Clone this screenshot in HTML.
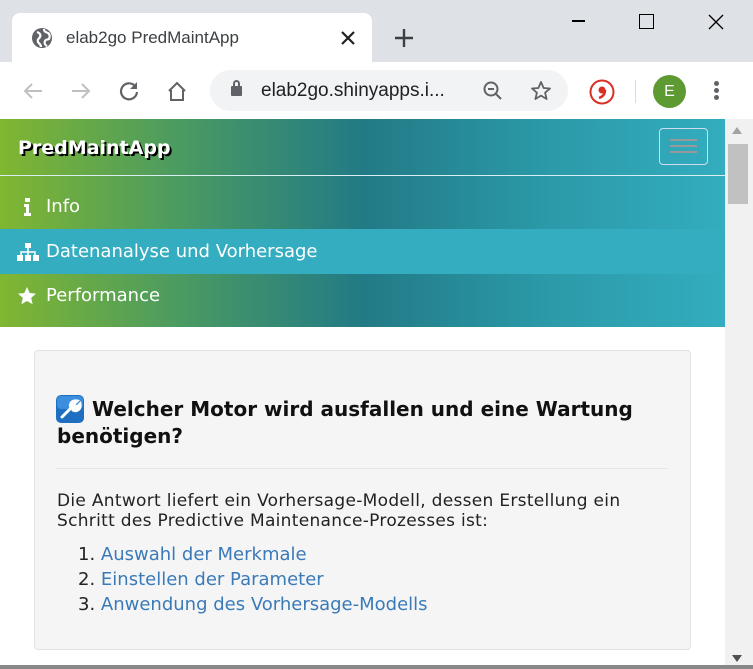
<!DOCTYPE html>
<html><head><meta charset="utf-8"><style>
*{margin:0;padding:0;box-sizing:border-box}
body{width:753px;height:669px;overflow:hidden;background:#fff;font-family:"DejaVu Sans","Liberation Sans",sans-serif;position:relative}
.a{position:absolute}
.grad{background:linear-gradient(90deg,#80b631 0%,#4a9a62 25%,#227a85 50%,#2b99a8 75%,#33adbf 100%)}
.nav{color:#fff;font-size:18px}
</style></head><body>
<div class="a" style="left:0;top:0;width:753px;height:62px;background:#dee1e6"></div>
<div class="a" style="left:12px;top:13px;width:360px;height:50px;background:#fff;border-radius:8px 8px 0 0"></div>
<svg class="a" style="left:31px;top:27px" width="22" height="22" viewBox="0 0 22 22"><circle cx="11" cy="11" r="10" fill="#5f6368"/><path d="M6 5c3 1 4 3 3 5s-3 2-2 5c1 2 3 2 3 5M13 2c0 3 2 3 4 4s2 4 1 6c-2 1-3 0-4 2s0 4 2 5" stroke="#fff" stroke-width="2.2" fill="none"/></svg>
<div class="a" style="left:66px;top:28px;font-family:'Liberation Sans',sans-serif;font-size:17px;color:#3c4043">elab2go PredMaintApp</div>
<svg class="a" style="left:341px;top:31px" width="14" height="14"><path d="M1 1L13 13M13 1L1 13" stroke="#202124" stroke-width="2.2"/></svg>
<svg class="a" style="left:394px;top:28px" width="20" height="20"><path d="M10 1v18M1 10h18" stroke="#3c4043" stroke-width="2.4"/></svg>
<div class="a" style="left:572px;top:20px;width:13px;height:1.5px;background:#000"></div>
<div class="a" style="left:639px;top:14px;width:15px;height:15px;border:1.5px solid #000"></div>
<svg class="a" style="left:708px;top:14px" width="16" height="16"><path d="M1 1L15 15M15 1L1 15" stroke="#000" stroke-width="1.3"/></svg>
<div class="a" style="left:0;top:62px;width:753px;height:56px;background:#fff"></div>
<svg class="a" style="left:22px;top:81px" width="22" height="20"><path d="M20 10H3M10 3L3 10l7 7" stroke="#c0c0c0" stroke-width="2" fill="none"/></svg>
<svg class="a" style="left:70px;top:81px" width="22" height="20"><path d="M2 10h17M12 3l7 7-7 7" stroke="#c0c0c0" stroke-width="2" fill="none"/></svg>
<svg class="a" style="left:118px;top:80px" width="22" height="22"><path d="M17 6A8 8 0 1 0 19 12" stroke="#5f6368" stroke-width="2.2" fill="none"/><path d="M19 2v7h-7z" fill="#5f6368"/></svg>
<svg class="a" style="left:166px;top:80px" width="22" height="22"><path d="M3 11L11 3l8 8M5 10v10h12V10" stroke="#5f6368" stroke-width="2" fill="none"/></svg>
<div class="a" style="left:210px;top:70px;width:358px;height:41px;background:#f1f3f4;border-radius:21px"></div>
<div class="a" style="left:231px;top:86px;width:11px;height:10px;background:#5f6368;border-radius:1px"></div>
<div class="a" style="left:233px;top:80px;width:7px;height:9px;border:2px solid #5f6368;border-radius:4px 4px 0 0"></div>
<div class="a" style="left:261px;top:80px;font-family:'Liberation Sans',sans-serif;font-size:19px;color:#202124">elab2go.shinyapps.i...</div>
<svg class="a" style="left:482px;top:80px" width="22" height="22"><circle cx="9" cy="9" r="6.5" stroke="#5f6368" stroke-width="2" fill="none"/><path d="M6 9h6M14 14l5 5" stroke="#5f6368" stroke-width="2"/></svg>
<svg class="a" style="left:530px;top:80px" width="22" height="22"><path d="M11 2l2.6 6 6.4.5-4.9 4.2 1.5 6.3L11 15.6 5.4 19l1.5-6.3L2 8.5 8.4 8z" stroke="#5f6368" stroke-width="1.8" fill="none" stroke-linejoin="round"/></svg>
<svg class="a" style="left:589px;top:79px" width="26" height="26"><circle cx="13" cy="13" r="11.5" stroke="#d93025" stroke-width="2" fill="none"/><circle cx="13" cy="11" r="3.5" fill="#d93025"/><path d="M16 11c0 5-3 7-6 8" stroke="#d93025" stroke-width="2.5" fill="none"/></svg>
<div class="a" style="left:635px;top:80px;width:1px;height:23px;background:#dadce0"></div>
<div class="a" style="left:653px;top:75px;width:33px;height:33px;border-radius:50%;background:#5e9a32;color:#fff;font:16px 'Liberation Sans',sans-serif;text-align:center;line-height:33px">E</div>
<div class="a" style="left:714px;top:81px;width:5px;height:5px;border-radius:50%;background:#5f6368;box-shadow:0 7px 0 #5f6368,0 14px 0 #5f6368"></div>
<div class="a grad" style="left:0;top:119px;width:725px;height:208px"></div>
<div class="a" style="left:0;top:175px;width:725px;height:1px;background:#d8eef2"></div>
<div class="a" style="left:18px;top:137px;font-size:19px;font-weight:bold;color:#fff;text-shadow:2px 2px 0 #000">PredMaintApp</div>
<div class="a" style="left:659px;top:128px;width:49px;height:37px;border:1px solid #cde;border-radius:4px"></div>
<div class="a" style="left:670px;top:139px;width:27px;height:2px;background:#999;box-shadow:0 6px 0 #999,0 12px 0 #999"></div>
<svg class="a" style="left:23px;top:198px" width="9" height="18"><rect x="2" y="0" width="5" height="4" fill="#fff"/><path d="M1 6h5v9h2v3H1v-3h2V9H1z" fill="#fff"/></svg>
<div class="a nav" style="left:46px;top:196px">Info</div>
<div class="a" style="left:0;top:229px;width:725px;height:45px;background:#33adbf"></div>
<svg class="a" style="left:17px;top:243px" width="22" height="18"><rect x="8" y="0" width="6" height="5" fill="#fff"/><path d="M11 5v4M4 12V9h14v3M11 9v3" stroke="#fff" stroke-width="1.5" fill="none"/><rect x="0" y="12" width="6" height="6" fill="#fff"/><rect x="8" y="12" width="6" height="6" fill="#fff"/><rect x="16" y="12" width="6" height="6" fill="#fff"/></svg>
<div class="a nav" style="left:46px;top:241px">Datenanalyse und Vorhersage</div>
<svg class="a" style="left:17px;top:286px" width="20" height="20"><path d="M10 1l2.7 6 6.3.6-4.8 4.3 1.4 6.4L10 15l-5.6 3.3 1.4-6.4L1 7.6 7.3 7z" fill="#fff"/></svg>
<div class="a nav" style="left:46px;top:285px">Performance</div>
<div class="a" style="left:725px;top:119px;width:28px;height:550px;background:#f1f1f1"></div>
<div class="a" style="left:728px;top:144px;width:20px;height:60px;background:#c1c1c1"></div>
<div class="a" style="left:732px;top:127px;width:0;height:0;border:5px solid transparent;border-bottom:7px solid #a3a3a3;border-top:0"></div>
<div class="a" style="left:732px;top:655px;width:0;height:0;border:5px solid transparent;border-top:7px solid #505050;border-bottom:0"></div>
<div class="a" style="left:0;top:665px;width:753px;height:4px;background:#888"></div>
<div class="a" style="left:34px;top:350px;width:657px;height:300px;background:#f5f5f5;border:1px solid #e3e3e3;border-radius:4px"></div>
<svg class="a" style="left:56px;top:395px" width="28" height="28"><rect width="28" height="28" rx="5" fill="#1e6fbf"/><rect x="1" y="1" width="26" height="13" rx="4" fill="#3b8fde"/><path d="M6 22L15 13M15 13c-2-4 1-8 6-7l-3 3 1 2 2 1 3-3c1 5-3 8-7 6" stroke="#fff" stroke-width="3" fill="#fff" stroke-linecap="round"/></svg>
<div class="a" style="left:57px;top:396px;width:630px;font-size:20px;font-weight:bold;color:#111;line-height:27px;text-indent:35px">Welcher Motor wird ausfallen und eine Wartung benötigen?</div>
<div class="a" style="left:56px;top:468px;width:611px;height:1px;background:#e6e6e6"></div>
<div class="a" style="left:57px;top:491px;width:610px;font-size:17px;letter-spacing:0.3px;color:#222;line-height:20px">Die Antwort liefert ein Vorhersage-Modell, dessen Erstellung ein Schritt des Predictive Maintenance-Prozesses ist:</div>
<div class="a" style="left:78px;top:542px;font-size:18px;line-height:25px;color:#222">1. <span style="color:#3a7ab8">Auswahl der Merkmale</span><br>2. <span style="color:#3a7ab8">Einstellen der Parameter</span><br>3. <span style="color:#3a7ab8">Anwendung des Vorhersage-Modells</span></div>
</body></html>
